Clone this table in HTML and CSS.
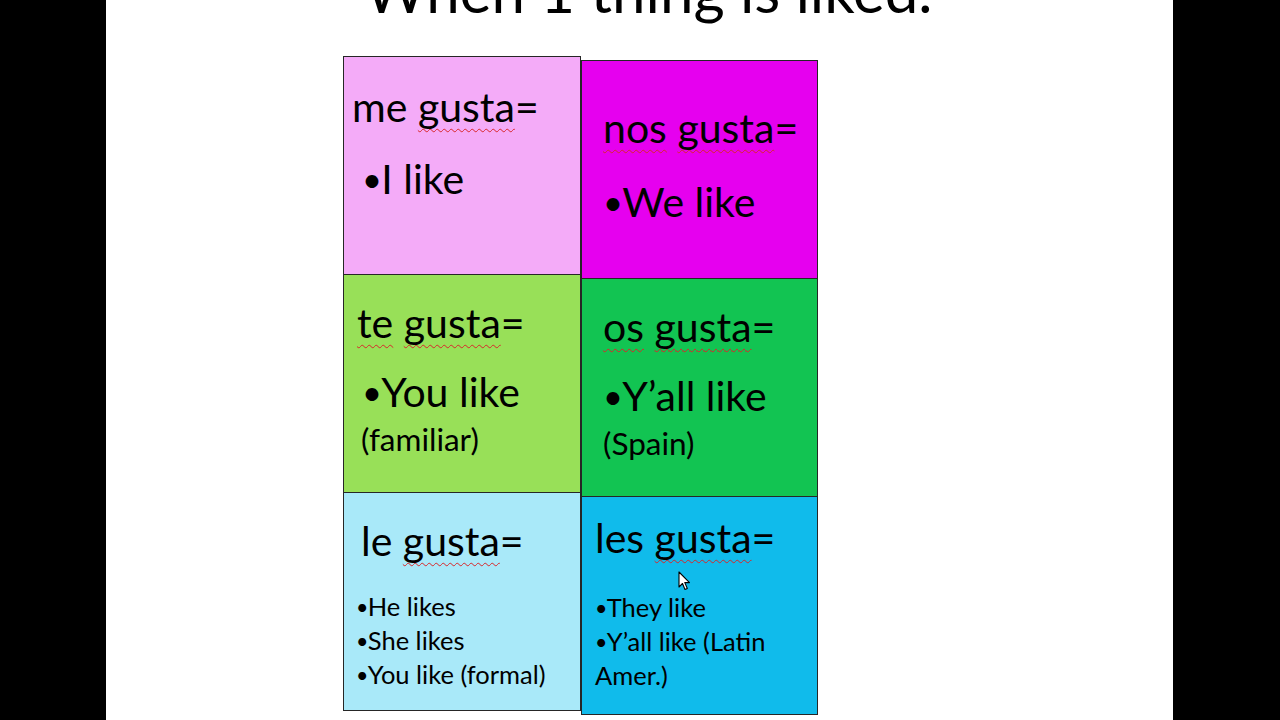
FILE: index.html
```html
<!DOCTYPE html>
<html lang="es">
<head>
<meta charset="utf-8">
<title>When 1 thing is liked</title>
<link rel="stylesheet" href="styles.css">
</head>
<body>
<main class="slide">
  <h1 class="title">When 1 thing is liked.</h1>
  <div class="board">
    <div class="col col-left">
      <section class="box pink">
        <p class="head">me <span class="sp">gusta</span>=</p>
        <p class="big"><span class="b">•</span>I like</p>
      </section>
      <section class="box lime">
        <p class="head"><span class="sp">te</span> <span class="sp">gusta</span>=</p>
        <p class="big"><span class="b">•</span>You like</p>
        <p class="mid">(familiar)</p>
      </section>
      <section class="box sky">
        <p class="head">le <span class="sp">gusta</span>=</p>
        <ul class="small">
          <li><span class="b">•</span>He likes</li>
          <li><span class="b">•</span>She likes</li>
          <li><span class="b">•</span>You like (formal)</li>
        </ul>
      </section>
    </div>
    <div class="col col-right">
      <section class="box magenta">
        <p class="head"><span class="sp">nos</span> <span class="sp">gusta</span>=</p>
        <p class="big"><span class="b">•</span>We like</p>
      </section>
      <section class="box green">
        <p class="head"><span class="sp">os</span> <span class="sp">gusta</span>=</p>
        <p class="big"><span class="b">•</span>Y’all like</p>
        <p class="mid">(Spain)</p>
      </section>
      <section class="box cyan">
        <p class="head">les <span class="sp">gusta</span>=</p>
        <ul class="small">
          <li><span class="b">•</span>They like</li>
          <li><span class="b">•</span>Y’all like (Latin</li>
          <li>Amer.)</li>
        </ul>
        <svg class="cursor" width="13" height="20" viewBox="0 0 13 20" aria-hidden="true">
          <path d="M1 1 L1 16 L4.5 12.5 L7 18.5 L9.3 17.5 L6.8 11.6 L11.5 11.6 Z" fill="#fff" stroke="#000" stroke-width="1.1" stroke-linejoin="round"/>
        </svg>
      </section>
    </div>
  </div>
</main>
</body>
</html>
```

FILE: styles.css
```css
html, body {
  margin: 0;
  padding: 0;
  height: 100%;
  background: #000;
  overflow: hidden;
}

body {
  padding-left: 106px;
  font-family: "Lato", "Open Sans", sans-serif;
  color: #000;
}

.slide {
  width: 1067px;
  height: 720px;
  background: #fff;
  overflow: hidden;
}

.title {
  margin: -40px 0 0 0;
  padding-left: 18px;
  font-size: 60px;
  line-height: 60px;
  font-weight: 400;
  text-align: center;
  white-space: nowrap;
}

.board {
  display: flex;
  padding-left: 237px;
  margin-top: 36px;
}

.col {
  display: flex;
  flex-direction: column;
}

.col-left { width: 238px; }
.col-right { width: 237px; margin-top: 4px; }

.box {
  position: relative;
  height: 219px;
  box-sizing: border-box;
  border: 1px solid #262626;
  margin-bottom: -1px;
}

.box p, .box ul {
  margin: 0;
  padding: 0;
  white-space: nowrap;
}

.box ul { list-style: none; }

.head {
  font-size: 41px;
  line-height: 48px;
}

.big {
  font-size: 41px;
  line-height: 48px;
}

.mid {
  font-size: 31.5px;
  line-height: 46px;
}

.small {
  font-size: 25.5px;
  line-height: 33.5px;
}

.b {
  font-size: 0.84em;
  vertical-align: 0.06em;
  margin-right: -0.02em;
}

.small .b {
  margin-right: -0.03em;
}

.sp {
  text-decoration: underline wavy #d8262a;
  text-decoration-thickness: 1.2px;
  text-underline-offset: 6px;
  text-decoration-skip-ink: none;
}

/* colours */
.pink    { background: #f4abf8; }
.magenta { background: #e600ef; }
.lime    { background: #98e058; }
.green   { background: #12c452; }
.sky     { background: #a9e9f9; }
.cyan    { background: #10bbeb; }

/* per-box text placement */
.pink    { padding: 26px 0 0 8px; }
.pink .big { margin-top: 24px; padding-left: 10px; }

.magenta { padding: 43px 0 0 21px; }
.magenta .big { margin-top: 26px; }

.lime    { padding: 24px 0 0 13px; }
.lime .big { margin-top: 21px; padding-left: 5px; }
.lime .mid { padding-left: 4px; }

.green   { padding: 24px 0 0 21px; }
.green .big { margin-top: 21px; }

.sky     { padding: 24px 0 0 17px; }
.sky .small { margin-top: 25px; margin-left: -5px; }

.cyan    { padding: 17px 0 0 13px; }
.cyan .small { margin-top: 29px; }

.cursor {
  position: absolute;
  left: 96px;
  top: 74px;
}
```
